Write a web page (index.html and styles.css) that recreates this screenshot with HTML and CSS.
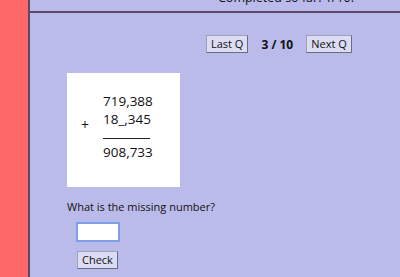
FILE: index.html
```html
<!DOCTYPE html>
<html>
<head>
<meta charset="utf-8">
<link rel="stylesheet" href="styles.css">
</head>
<body>
<div class="page">
  <aside class="sidebar"></aside>
  <main class="main">
    <header class="status"><span class="status-text">Completed so far: 1/10.</span></header>
    <nav class="nav">
      <button class="btn">Last Q</button>
      <span class="count">3 / 10</span>
      <button class="btn">Next Q</button>
    </nav>
    <div class="card">
      <div class="sum">
        <span class="op">+</span>
        <div class="nums">
          <div>719,388</div>
          <div>18_,345</div>
          <div class="rule"></div>
          <div>908,733</div>
        </div>
      </div>
    </div>
    <p class="question">What is the missing number?</p>
    <input class="answer" type="text">
    <button class="btn check">Check</button>
  </main>
</div>
</body>
</html>
```
FILE: styles.css
```css
html, body {
  margin: 0;
  padding: 0;
  height: 100%;
  overflow: hidden;
  background: #bbbbeb;
  font-family: "Open Sans", "DejaVu Sans", sans-serif;
  color: #111;
}
.page {
  display: flex;
  min-height: 100%;
}
.sidebar {
  width: 28px;
  flex: none;
  background: #fe6868;
  border-right: 2px solid #5e4a68;
}
.main {
  flex: 1;
  display: flex;
  flex-direction: column;
  align-items: flex-start;
}
.status {
  align-self: stretch;
  height: 11px;
  border-bottom: 2px solid #5e4a68;
  overflow: hidden;
}
.status-text {
  display: block;
  margin-top: -10px;
  margin-left: 188px;
  font-size: 12.5px;
  line-height: 16px;
}
.nav {
  display: flex;
  align-items: center;
  margin-top: 22px;
  margin-left: 176px;
  gap: 12px;
}
.btn {
  font-family: "Open Sans", "DejaVu Sans", sans-serif;
  font-size: 11px;
  line-height: 14px;
  padding: 1px 4px;
  background: #dcdcf4;
  border: 1px solid #a0a0b8;
  border-right-color: #6c6c7c;
  border-bottom-color: #6c6c7c;
  border-radius: 0;
  color: #111;
}
.count {
  font-weight: bold;
  font-size: 12px;
  margin: 0 1px;
}
.card {
  margin-top: 20px;
  margin-left: 37px;
  width: 113px;
  height: 114px;
  background: #fff;
  box-sizing: border-box;
  padding-top: 19px;
}
.sum {
  display: flex;
  align-items: flex-start;
}
.op {
  font-size: 14px;
  margin-left: 14px;
  margin-top: 23px;
  width: 22px;
}
.nums {
  font-size: 13.5px;
  line-height: 18px;
}
.rule {
  width: 47px;
  border-top: 1px solid #222;
  margin: 10px 0 4px;
}
.question {
  margin: 12px 0 0 37px;
  font-size: 11px;
}
.answer {
  margin: 8px 0 0 46px;
  width: 38px;
  height: 16px;
  border: 2px solid #7aa0e8;
  background: #fff;
  padding: 0 1px;
}
.check {
  margin: 9px 0 0 47px;
}
```
